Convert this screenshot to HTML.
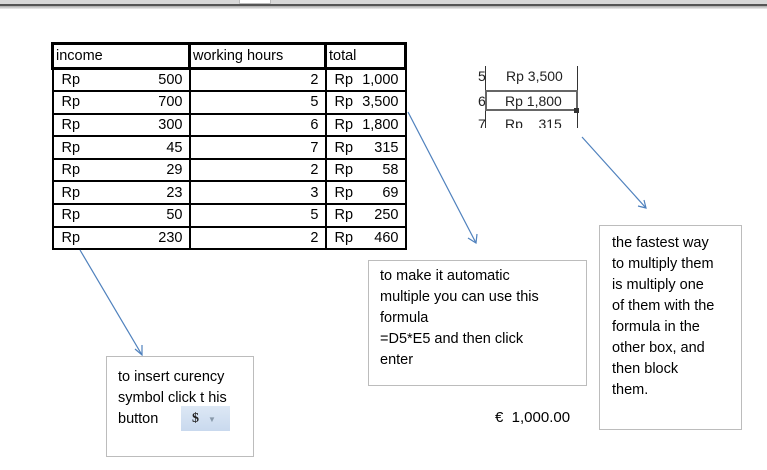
<!DOCTYPE html>
<html><head><style>
body{margin:0;width:767px;height:470px;background:#fff;position:relative;overflow:hidden;font-family:"Liberation Sans",sans-serif;color:#000}
.top{position:absolute;left:0;top:0;width:767px;height:4px;background:#d8d8d8}
.top2{position:absolute;left:0;top:4px;width:767px;height:2px;background:#555}
.top3{position:absolute;left:0;top:6px;width:767px;height:3px;background:linear-gradient(#aaa,#eee)}
.tab{position:absolute;left:239px;top:0;width:30px;height:3px;background:#fff;border:1px solid #bbb;border-top:none}
table{position:absolute;left:51px;top:42px;border-collapse:collapse;font-size:14.5px;table-layout:fixed;width:353px}
td{border:2px solid #000;height:20.6px;padding:0 6px 0 8px;line-height:20px;white-space:nowrap;box-sizing:border-box}
tr{height:22.6px}
tr.h{height:25px}
tr.h td{border-width:3px;padding:0 2px;height:25px}
.r{text-align:right}
.sp{display:flex;justify-content:space-between}
.box{position:absolute;border:1px solid #bcbcbc;background:#fff;font-size:14.5px;line-height:21px;box-sizing:border-box}
</style></head><body>
<div class="top"></div><div class="top2"></div><div class="top3"></div><div class="tab"></div>
<table>
<colgroup><col style="width:137px"><col style="width:136px"><col style="width:80px"></colgroup>
<tr class="h"><td>income</td><td>working hours</td><td>total</td></tr>
<tr><td><div class="sp"><span>Rp</span><span>500</span></div></td><td class="r">2</td><td><div class="sp"><span>Rp</span><span>1,000</span></div></td></tr>
<tr><td><div class="sp"><span>Rp</span><span>700</span></div></td><td class="r">5</td><td><div class="sp"><span>Rp</span><span>3,500</span></div></td></tr>
<tr><td><div class="sp"><span>Rp</span><span>300</span></div></td><td class="r">6</td><td><div class="sp"><span>Rp</span><span>1,800</span></div></td></tr>
<tr><td><div class="sp"><span>Rp</span><span>45</span></div></td><td class="r">7</td><td><div class="sp"><span>Rp</span><span>315</span></div></td></tr>
<tr><td><div class="sp"><span>Rp</span><span>29</span></div></td><td class="r">2</td><td><div class="sp"><span>Rp</span><span>58</span></div></td></tr>
<tr><td><div class="sp"><span>Rp</span><span>23</span></div></td><td class="r">3</td><td><div class="sp"><span>Rp</span><span>69</span></div></td></tr>
<tr><td><div class="sp"><span>Rp</span><span>50</span></div></td><td class="r">5</td><td><div class="sp"><span>Rp</span><span>250</span></div></td></tr>
<tr><td><div class="sp"><span>Rp</span><span>230</span></div></td><td class="r">2</td><td><div class="sp"><span>Rp</span><span>460</span></div></td></tr>
</table>

<div style="position:absolute;left:478px;top:66px;width:104px;height:62px;overflow:hidden;font-size:14px;color:#222">
 <div style="position:absolute;left:7px;top:0;width:1px;height:62px;background:#333"></div>
 <div style="position:absolute;left:99px;top:0;width:1px;height:62px;background:#333"></div>
 <div style="position:absolute;left:0;top:2px">5</div><div style="position:absolute;left:28px;top:2px">Rp 3,500</div>
 <div style="position:absolute;left:0;top:27px">6</div>
 <div style="position:absolute;left:7px;top:24px;width:93px;height:21px;border:2px solid #666;box-sizing:border-box"></div>
 <div style="position:absolute;left:96px;top:42px;width:5px;height:5px;background:#333"></div>
 <div style="position:absolute;left:27px;top:27px">Rp 1,800</div>
 <div style="position:absolute;left:0;top:50px">7</div><div style="position:absolute;left:27px;top:50px">Rp&nbsp;&nbsp;&nbsp;&nbsp;315</div>
</div>

<svg style="position:absolute;left:0;top:0" width="767" height="470">
<g stroke="#4f81bd" stroke-width="1.2" fill="none">
<line x1="80" y1="250" x2="142" y2="355"/><polyline points="135,349 142,355 142,345"/>
<line x1="408" y1="112" x2="476" y2="243"/><polyline points="468,238 476,243 477,234"/>
<line x1="582" y1="137" x2="646" y2="208"/><polyline points="638,206 646,208 644,200"/>
</g></svg>

<div class="box" style="left:368px;top:260px;width:219px;height:126px;padding:5px 0 0 11px">to make it automatic<br>multiple you can use this<br>formula<br>=D5*E5 and then click<br>enter</div>
<div class="box" style="left:599px;top:225px;width:143px;height:205px;padding:7px 0 0 12px">the fastest way<br>to multiply them<br>is multiply one<br>of them with the<br>formula in the<br>other box, and<br>then block<br>them.</div>
<div class="box" style="left:106px;top:356px;width:148px;height:101px;padding:10px 0 0 11px">to insert curency<br>symbol click t his<br>button</div>
<div style="position:absolute;left:181px;top:406px;width:49px;height:25px;background:linear-gradient(#dde8f5,#c9d9ee);font:bold 14px 'Liberation Serif',serif;line-height:25px;color:#222"><span style="margin-left:11px">$</span><span style="font-size:8px;color:#8899aa;margin-left:9px">▼</span></div>
<div style="position:absolute;left:495px;top:409px;font-size:15px">€&nbsp;&nbsp;1,000.00</div>
</body></html>
